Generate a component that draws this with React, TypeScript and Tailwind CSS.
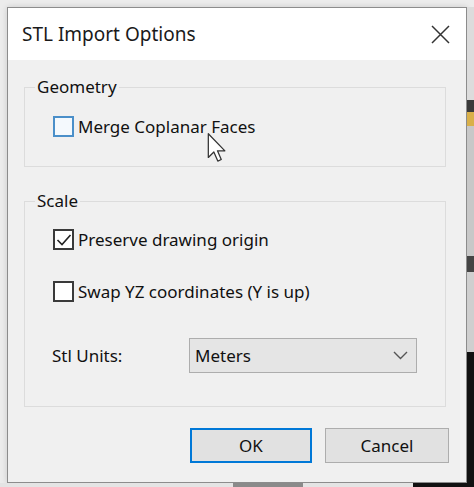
import React from "react";

function CheckBox({ checked, hover }: { checked?: boolean; hover?: boolean }) {
  return (
    <div
      className={
        "w-[21px] h-[21px] border-2 flex items-center justify-center shrink-0 " +
        (hover ? "border-[#4a8fc9] bg-[#f4f9fd]" : "border-[#3a3a3a] bg-white")
      }
    >
      {checked && (
        <svg width="16" height="14" viewBox="0 0 16 14">
          <polyline points="1.5,7 6,11.5 14.5,2" fill="none" stroke="#222" strokeWidth="1.6" />
        </svg>
      )}
    </div>
  );
}

function Row({ label, checked, hover, className }: { label: string; checked?: boolean; hover?: boolean; className: string }) {
  return (
    <div className={"flex items-center h-[21px] ml-[18px] " + className}>
      <CheckBox checked={checked} hover={hover} />
      <span className="ml-[4px] text-[17px] leading-[21px] text-[#111]">{label}</span>
    </div>
  );
}

function Cursor() {
  return (
    <svg className="absolute left-[206px] top-[133px]" width="22" height="30" viewBox="0 0 12 19">
      <path
        d="M0.5 0.5 L0.5 15.5 L4 12 L6.5 17.8 L8.7 16.8 L6.3 11.3 L11 11.3 Z"
        fill="#fff"
        stroke="#333"
        strokeWidth="0.8"
        strokeLinejoin="round"
      />
    </svg>
  );
}

export default function App() {
  return (
    <div className="w-[474px] h-[487px] bg-[#ececec] overflow-hidden relative flex flex-col font-['Noto_Sans',sans-serif]">
      <div className="flex pt-[7px] pl-[7px]">
        {/* Dialog */}
        <div className="w-[460px] h-[476px] border border-[#8c8c8c] flex flex-col shadow-[0_0_6px_rgba(0,0,0,0.15)]">
          <div className="h-[52px] bg-white flex items-center justify-between pl-[14px] pr-[16px]">
            <span className="text-[19px] text-[#1a1a1a]">STL Import Options</span>
            <svg width="19" height="19" viewBox="0 0 19 19">
              <path d="M1 1 L18 18 M18 1 L1 18" stroke="#333" strokeWidth="1.5" />
            </svg>
          </div>
          <div className="flex-1 bg-[#f0f0f0] flex flex-col px-[16px]">
            <fieldset className="mt-[15px] w-[422px] border border-[#dcdcdc] px-[10px] pb-[29px]">
              <legend className="px-[2px] text-[17px] leading-[24px] text-[#111]">Geometry</legend>
              <Row label="Merge Coplanar Faces" hover className="mt-[17px]" />
            </fieldset>

            <fieldset className="mt-[22px] w-[422px] border border-[#dcdcdc] px-[10px] pb-[33px]">
              <legend className="px-[2px] text-[17px] leading-[24px] text-[#111]">Scale</legend>
              <Row label="Preserve drawing origin" checked className="mt-[16px]" />
              <Row label="Swap YZ coordinates (Y is up)" className="mt-[31px]" />
              <div className="flex items-center mt-[36px] h-[35px] ml-[17px]">
                <span className="w-[137px] text-[17px] text-[#111]">Stl Units:</span>
                <div className="w-[228px] h-[35px] bg-[#e5e5e5] border border-[#adadad] flex items-center justify-between pl-[5px] pr-[8px]">
                  <span className="text-[17px] text-[#111]">Meters</span>
                  <svg width="15" height="9" viewBox="0 0 15 9">
                    <polyline points="1,1 7.5,7.5 14,1" fill="none" stroke="#555" strokeWidth="1.4" />
                  </svg>
                </div>
              </div>
            </fieldset>

            <div className="flex justify-end gap-[13px] mt-[21px] mr-[1px]">
              <button className="w-[122px] h-[35px] bg-[#e1e1e1] border-2 border-[#0078d7] text-[17px] text-[#111]">
                OK
              </button>
              <button className="w-[124px] h-[35px] bg-[#e1e1e1] border border-[#adadad] text-[17px] text-[#111]">
                Cancel
              </button>
            </div>
          </div>
        </div>
        {/* Background window peeking at right */}
        <div className="flex-1 flex flex-col">
          <div className="h-[93px] bg-[#dcdcdc]" />
          <div className="h-[12px] bg-[#3a3a3a]" />
          <div className="h-[14px] bg-[#d9b04a]" />
          <div className="h-[130px] bg-[#c8c8c8]" />
          <div className="h-[16px] bg-[#444]" />
          <div className="h-[80px] bg-[#cfcfcf]" />
          <div className="flex-1 bg-[#111]" />
        </div>
      </div>
      <div className="flex-1 flex">
        <div className="w-[233px] bg-[#e4e4e4]" />
        <div className="w-[70px] bg-[#8a8a8a]" />
        <div className="w-[110px] bg-[#e4e4e4]" />
        <div className="flex-1 bg-[#111]" />
      </div>
      <Cursor />
    </div>
  );
}
